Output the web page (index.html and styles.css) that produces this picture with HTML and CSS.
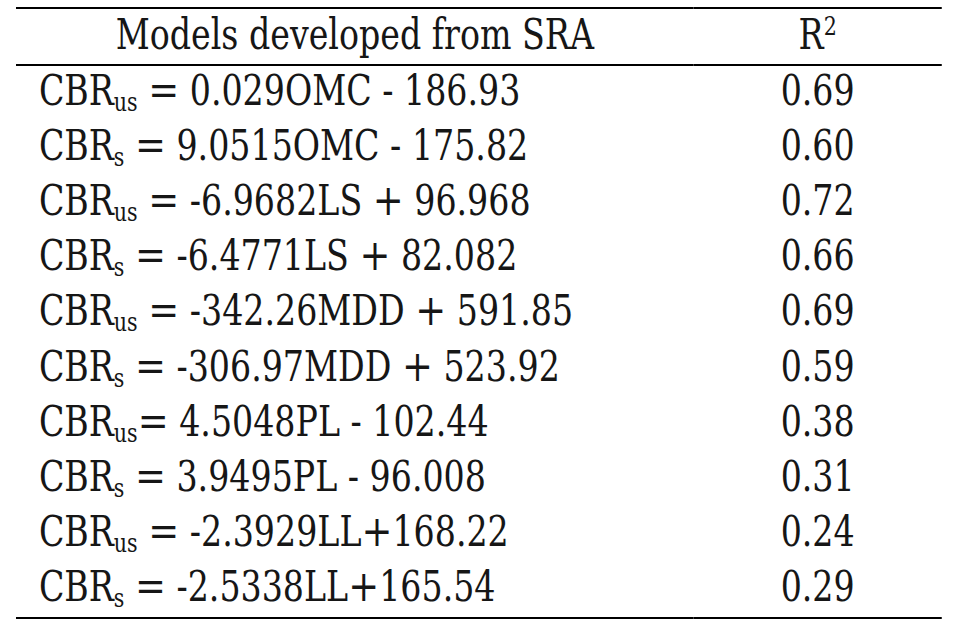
FILE: index.html
```html
<!DOCTYPE html>
<html>
<head>
<meta charset="utf-8">
<link rel="stylesheet" href="styles.css">
</head>
<body>
<div class="sheet">
<table class="models">
  <thead>
    <tr><th class="eq-h">Models developed from SRA</th><th class="r2">R<sup>2</sup></th></tr>
  </thead>
  <tbody>
    <tr><td class="eq">CBR<sub>us</sub> <span class="op">=</span> 0.029OMC - 186.93</td><td class="r2">0.69</td></tr>
    <tr><td class="eq">CBR<sub>s</sub> <span class="op">=</span> 9.0515OMC - 175.82</td><td class="r2">0.60</td></tr>
    <tr><td class="eq">CBR<sub>us</sub> <span class="op">=</span> -6.9682LS <span class="op">+</span> 96.968</td><td class="r2">0.72</td></tr>
    <tr><td class="eq">CBR<sub>s</sub> <span class="op">=</span> -6.4771LS <span class="op">+</span> 82.082</td><td class="r2">0.66</td></tr>
    <tr><td class="eq">CBR<sub>us</sub> <span class="op">=</span> -342.26MDD <span class="op">+</span> 591.85</td><td class="r2">0.69</td></tr>
    <tr><td class="eq">CBR<sub>s</sub> <span class="op">=</span> -306.97MDD <span class="op">+</span> 523.92</td><td class="r2">0.59</td></tr>
    <tr><td class="eq">CBR<sub>us</sub><span class="op">=</span> 4.5048PL - 102.44</td><td class="r2">0.38</td></tr>
    <tr><td class="eq">CBR<sub>s</sub> <span class="op">=</span> 3.9495PL - 96.008</td><td class="r2">0.31</td></tr>
    <tr><td class="eq">CBR<sub>us</sub> <span class="op">=</span> -2.3929LL<span class="op">+</span>168.22</td><td class="r2">0.24</td></tr>
    <tr><td class="eq">CBR<sub>s</sub> <span class="op">=</span> -2.5338LL<span class="op">+</span>165.54</td><td class="r2">0.29</td></tr>
  </tbody>
</table>
</div>
</body>
</html>
```
FILE: styles.css
```css
html, body {
  margin: 0;
  padding: 0;
  background: #fff;
  overflow: hidden;
}
.sheet {
  width: 959px;
  height: 619px;
  padding-top: 7px;
  box-sizing: border-box;
  overflow: hidden;
}
.models {
  margin-left: 16px;
  width: 1052px;
  border-collapse: collapse;
  font-family: "DejaVu Serif Condensed", "DejaVu Serif", serif;
  font-size: 42px;
  color: #161616;
  border-top: 2px solid #000;
  border-bottom: 2px solid #000;
  transform: scaleX(0.88);
  transform-origin: 0 0;
}
.models th {
  font-weight: normal;
  height: 52px;
  padding: 0 0 3px 0;
  border-bottom: 2px solid #000;
  line-height: 1;
  vertical-align: middle;
}
.models td {
  height: 50.1px;
  padding: 0 0 5px 0;
  line-height: 1;
  vertical-align: middle;
}
.eq-h {
  width: 770px;
  text-align: center;
}
.models td.eq {
  text-align: left;
  padding-left: 26px;
  white-space: nowrap;
}
.r2 {
  text-align: center;
}
.op {
  font-family: "DejaVu Serif", serif;
}
sub {
  font-size: 0.62em;
  vertical-align: -0.22em;
  line-height: 0;
}
sup {
  font-size: 0.62em;
  vertical-align: 0.55em;
  line-height: 0;
}
```
